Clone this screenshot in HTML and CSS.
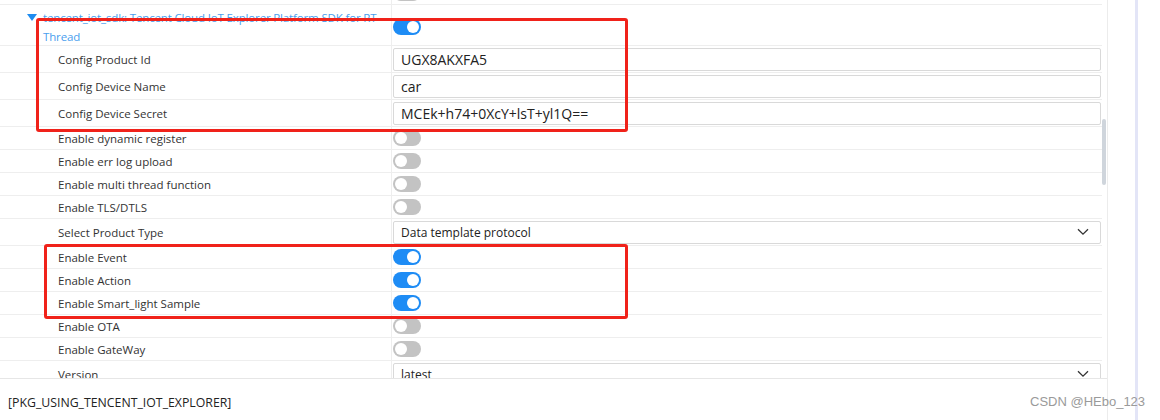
FILE: index.html
```html
<!DOCTYPE html>
<html>
<head>
<meta charset="utf-8">
<link rel="stylesheet" href="styles.css">
</head>
<body>
<div class="screen">
  <div class="main">
    <div class="panel">
      <div class="rows">
        <div class="row"><div class="label"></div><div class="value"><span class="switch"></span></div></div>
        <div class="row row-group">
          <div class="label label-group"><span class="caret"></span><span class="group-title">tencent_iot_sdk: Tencent Cloud IoT Explorer Platform SDK for RT-Thread</span></div>
          <div class="value value-group"><span class="switch on"></span></div>
        </div>
        <div class="row row-field"><div class="label">Config Product Id</div><div class="value"><div class="input">UGX8AKXFA5</div></div></div>
        <div class="row row-field"><div class="label">Config Device Name</div><div class="value"><div class="input">car</div></div></div>
        <div class="row row-field"><div class="label">Config Device Secret</div><div class="value"><div class="input">MCEk+h74+0XcY+lsT+yl1Q==</div></div></div>
        <div class="row"><div class="label">Enable dynamic register</div><div class="value"><span class="switch"></span></div></div>
        <div class="row"><div class="label">Enable err log upload</div><div class="value"><span class="switch"></span></div></div>
        <div class="row"><div class="label">Enable multi thread function</div><div class="value"><span class="switch"></span></div></div>
        <div class="row"><div class="label">Enable TLS/DTLS</div><div class="value"><span class="switch"></span></div></div>
        <div class="row row-field"><div class="label">Select Product Type</div><div class="value"><div class="select"><span>Data template protocol</span><svg class="chev" width="12" height="8" viewBox="0 0 12 8"><path d="M1 1.2 L6 6.2 L11 1.2" fill="none" stroke="#333" stroke-width="1.3"/></svg></div></div></div>
        <div class="row"><div class="label">Enable Event</div><div class="value"><span class="switch on"></span></div></div>
        <div class="row"><div class="label">Enable Action</div><div class="value"><span class="switch on"></span></div></div>
        <div class="row"><div class="label">Enable Smart_light Sample</div><div class="value"><span class="switch on"></span></div></div>
        <div class="row"><div class="label">Enable OTA</div><div class="value"><span class="switch"></span></div></div>
        <div class="row"><div class="label">Enable GateWay</div><div class="value"><span class="switch"></span></div></div>
        <div class="row row-field"><div class="label">Version</div><div class="value"><div class="select"><span>latest</span><svg class="chev" width="12" height="8" viewBox="0 0 12 8"><path d="M1 1.2 L6 6.2 L11 1.2" fill="none" stroke="#333" stroke-width="1.3"/></svg></div></div></div>
      </div>
      <div class="scrollbar"><div class="thumb"></div></div>
    </div>
    <div class="status">[PKG_USING_TENCENT_IOT_EXPLORER]</div>
    <div class="mark mark-top"></div>
    <div class="mark mark-bottom"></div>
  </div>
  <div class="gutter"><div class="stripe"></div></div>
  <div class="watermark">CSDN @HEbo_123</div>
</div>
</body>
</html>
```
FILE: styles.css
```css
* { box-sizing: border-box; }
html, body { margin: 0; padding: 0; background: #fff; }
body { font-family: "Open Sans", "Noto Sans", "Liberation Sans", sans-serif; color: #333; }

.screen { position: relative; display: flex; width: 1160px; height: 420px; overflow: hidden; }

.main { position: relative; width: 1108px; height: 420px; border-right: 1px solid #ececec; display: flex; flex-direction: column; }

.panel { height: 378px; overflow: hidden; display: flex; }
.rows { width: 1102px; margin-top: -18px; }
.scrollbar { width: 5px; position: relative; }
.thumb { position: absolute; top: 119px; left: 0; width: 4px; height: 66px; background: #cfd5dc; border-radius: 2px; }

.row { display: flex; height: 23px; border-bottom: 1px solid #eeeeee; }
.row-field { height: 27px; }
.row-group { height: 41px; }

.label { width: 392px; flex: none; border-right: 1px solid #eeeeee; padding-left: 58px; display: flex; align-items: center; font-size: 11.5px; color: #333; white-space: nowrap; }
.value { flex: 1; padding-left: 1px; display: flex; align-items: center; }

.label-group { padding-left: 27px; align-items: flex-start; padding-top: 3px; white-space: normal; }
.caret { flex: none; width: 0; height: 0; margin-top: 6px; margin-right: 6px; border-left: 5px solid transparent; border-right: 5px solid transparent; border-top: 7px solid #1e8cf0; }
.group-title { width: 345px; line-height: 19px; font-size: 11.5px; letter-spacing: -0.15px; color: #4aa0ee; }
.value-group { padding-top: 3px; }

.switch { position: relative; display: block; width: 28px; height: 16px; border-radius: 8px; background: #c3c3c3; }
.switch::after { content: ""; position: absolute; top: 2px; left: 2px; width: 12px; height: 12px; border-radius: 50%; background: #fff; }
.switch.on { background: #1e8cf5; }
.switch.on::after { left: 14px; }

.input, .select { width: 708px; height: 23px; border: 1px solid #d9d9d9; border-radius: 2px; padding-left: 7px; display: flex; align-items: center; }
.input { font-size: 14px; color: #222; }
.select { font-size: 12px; color: #222; justify-content: space-between; padding-right: 11px; }
.chev { display: block; }

.status { flex: 1; border-top: 1px solid #e6e6e6; padding-left: 8px; padding-top: 14px; font-size: 12.3px; line-height: 20px; color: #222; }

.mark { position: absolute; border: 3px solid #f0221a; border-radius: 3px; }
.mark-top { left: 36px; top: 18px; width: 592px; height: 114px; }
.mark-bottom { left: 44px; top: 244px; width: 584px; height: 75px; }

.gutter { flex: 1; padding-left: 27px; }
.stripe { width: 3px; height: 420px; background: #e3e5f7; }

.watermark { position: absolute; left: 1030px; top: 394px; font-family: "Liberation Sans", Arial, sans-serif; font-size: 13px; color: #9a9a9a; }
```
